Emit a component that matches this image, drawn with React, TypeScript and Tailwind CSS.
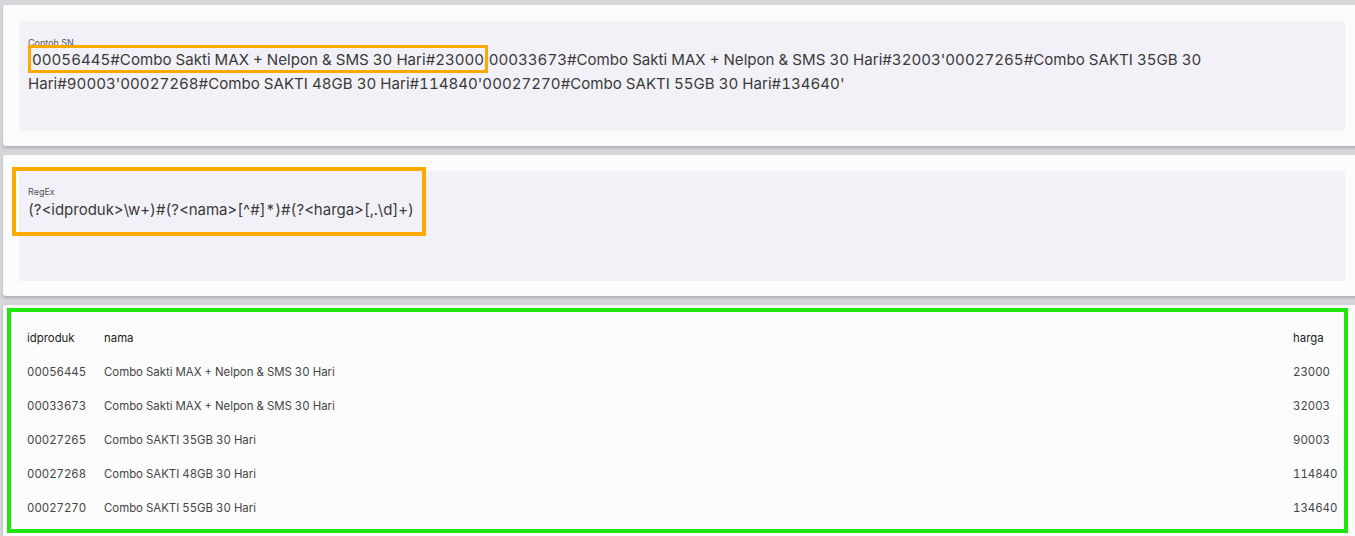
import React from "react";

const rows = [
  ["00056445", "Combo Sakti MAX + Nelpon & SMS 30 Hari", "23000"],
  ["00033673", "Combo Sakti MAX + Nelpon & SMS 30 Hari", "32003"],
  ["00027265", "Combo SAKTI 35GB 30 Hari", "90003"],
  ["00027268", "Combo SAKTI 48GB 30 Hari", "114840"],
  ["00027270", "Combo SAKTI 55GB 30 Hari", "134640"],
];

const sn =
  "00056445#Combo Sakti MAX + Nelpon & SMS 30 Hari#23000'00033673#Combo Sakti MAX + Nelpon & SMS 30 Hari#32003'00027265#Combo SAKTI 35GB 30 Hari#90003'00027268#Combo SAKTI 48GB 30 Hari#114840'00027270#Combo SAKTI 55GB 30 Hari#134640'";

export default function App() {
  return (
    <div
      className="h-[536px] w-[1355px] overflow-hidden bg-[#d6d6da] pt-[5px] pl-[3px] text-[#3a3a3a] tabular-nums"
      style={{ fontFamily: "Inter, 'Noto Sans', sans-serif" }}
    >
      <div className="flex w-[1358px] flex-col gap-[9px]">
        {/* Card 1 */}
        <div className="relative h-[141px] rounded-[3px] bg-[#fcfcfc] p-4 shadow-[0_2px_3px_rgba(0,0,0,0.18)]">
          <div className="h-[110px] bg-[#f3f1f8] px-[9px] pt-[17px]">
            <div className="text-[9px] leading-[10px] text-[#555]">Contoh SN</div>
            <div className="indent-[4px] text-[15.1px] leading-[24px] break-words">{sn}</div>
          </div>
          <div className="pointer-events-none absolute left-[25px] top-[40px] h-[28px] w-[460px] border-[3px] border-[#ffa800]" />
        </div>

        {/* Card 2 */}
        <div className="relative h-[141px] rounded-[3px] bg-[#fcfcfc] p-4 shadow-[0_2px_3px_rgba(0,0,0,0.18)]">
          <div className="h-[110px] bg-[#f3f1f8] px-[9px] pt-[16px]">
            <div className="text-[9px] leading-[10px] text-[#555]">RegEx</div>
            <div className="mt-[1px] text-[15px] leading-[24px]">
              {"(?<idproduk>\\w+)#(?<nama>[^#]*)#(?<harga>[,.\\d]+)"}
            </div>
          </div>
          <div className="pointer-events-none absolute left-[9px] top-[12px] h-[69px] w-[414px] border-4 border-[#ffa800]" />
        </div>

        {/* Card 3 */}
        <div className="relative h-[240px] rounded-[3px] bg-[#fcfcfc] pt-[17px] pl-6 pr-[8px] shadow-[0_2px_3px_rgba(0,0,0,0.18)]">
          <div className="grid grid-cols-[77px_1fr_60px] text-[11.4px] text-[#444]">
            <div className="flex h-[34px] items-center text-[#222]">idproduk</div>
            <div className="flex h-[34px] items-center text-[#222]">nama</div>
            <div className="flex h-[34px] items-center text-[#222]">harga</div>
            {rows.map((r) => (
              <React.Fragment key={r[0]}>
                <div className="flex h-[34px] items-center">{r[0]}</div>
                <div className="flex h-[34px] items-center">{r[1]}</div>
                <div className="flex h-[34px] items-center">{r[2]}</div>
              </React.Fragment>
            ))}
          </div>
          <div className="pointer-events-none absolute left-[4px] top-[3px] h-[225px] w-[1341px] border-4 border-[#22e40e]" />
        </div>
      </div>
    </div>
  );
}
